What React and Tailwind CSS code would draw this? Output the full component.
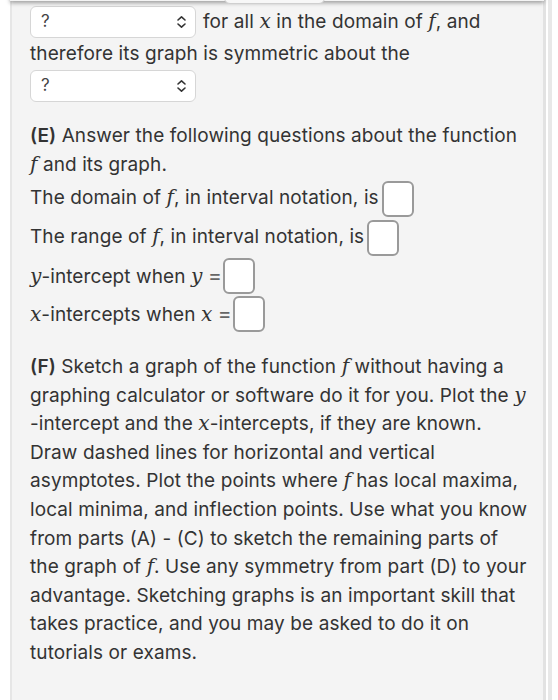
import React from 'react';

const sans = { fontFamily: 'Inter, "Liberation Sans", sans-serif' };

// math variables rendered in an italic serif, like KaTeX output
const M = ({ children }) => (
  <span className="italic text-[1.06em] leading-none [font-family:'DejaVu_Serif','Liberation_Serif',serif] tracking-normal">{children}</span>
);

const UpDown = () => (
  <svg width="11" height="14" viewBox="0 0 11 14" fill="none" stroke="#333" strokeWidth="1.6" strokeLinecap="round" strokeLinejoin="round">
    <path d="M2 5 L5.5 1.8 L9 5" />
    <path d="M2 9 L5.5 12.2 L9 9" />
  </svg>
);

const Select = () => (
  <div className="flex items-center justify-between w-[166px] h-[32px] bg-white border border-[#d6d6d6] rounded-[6px] pl-[10px] pr-[8px] shrink-0">
    <span className="text-[17px] text-[#444]">?</span>
    <UpDown />
  </div>
);

const Box = () => (
  <div className="w-[32px] h-[36px] bg-white border-2 border-[#9a9a9a] rounded-[6px] shrink-0" />
);

const App = () => {
  return (
    <div className="relative w-[558px] h-[700px] overflow-hidden bg-white text-[#333]" style={sans}>
      {/* shadow of the toolbar above the viewport */}
      <div className="absolute left-[10px] right-[14px] top-[-20px] h-[21px] bg-[#f4f4f4] shadow-[0_2px_4px_rgba(0,0,0,0.35)] z-10" />
      <div className="absolute left-[224px] w-[101px] top-[-20px] h-[24px] bg-[#f7f7f7] border border-[#cfcfcf] rounded-[6px] z-20" />

      <div className="flex h-full">
        <div className="ml-[10px] w-[536px] h-full bg-[#f4f4f4] border-l-2 border-l-[#e6e6e6] border-r-[3px] border-r-[#e2e2e2] pl-[18px] pr-[14px] pt-[6px] text-[19px] tracking-[0.1px]">
          <div className="flex items-center h-[32px]">
            <Select />
            <span className="ml-[7px] whitespace-nowrap">
              for all <M>x</M> in the domain of <M>f</M>, and
            </span>
          </div>
          <div className="leading-[29px] h-[29px] mt-[1px]">therefore its graph is symmetric about the</div>
          <div className="mt-[2px]">
            <Select />
          </div>

          <div className="mt-[19px] leading-[29px]">
            <span className="font-semibold">(E)</span> Answer the following questions about the function <M>f</M> and its graph.
          </div>
          <div className="flex items-center h-[39px]">
            <span>The domain of <M>f</M>, in interval notation, is</span>
            <span className="ml-[3px]"><Box /></span>
          </div>
          <div className="flex items-center h-[39px]">
            <span>The range of <M>f</M>, in interval notation, is</span>
            <span className="ml-[3px]"><Box /></span>
          </div>
          <div className="flex items-center h-[38px]">
            <span><M>y</M>-intercept when <M>y</M> <span className="text-[#666] text-[21px]">=</span></span>
            <span className="ml-[1px]"><Box /></span>
          </div>
          <div className="flex items-center h-[38px]">
            <span><M>x</M>-intercepts when <M>x</M> <span className="text-[#666] text-[21px]">=</span></span>
            <span className="ml-[1px]"><Box /></span>
          </div>

          <p className="mt-[20px] leading-[28.6px]">
            <span className="font-semibold">(F)</span> Sketch a graph of the function <M>f</M> without having a graphing calculator or software do it for you. Plot the <M>y</M> -intercept and the <M>x</M>-intercepts, if they are known. Draw dashed lines for horizontal and vertical asymptotes. Plot the points where <M>f</M> has local maxima, local minima, and inflection points. Use what you know from parts (A) - (C) to sketch the remaining parts of the graph of <M>f</M>. Use any symmetry from part (D) to your advantage. Sketching graphs is an important skill that takes practice, and you may be asked to do it on tutorials or exams.
          </p>
        </div>
        <div className="ml-[2px] w-[4px] h-full bg-[#e8e8e8]" />
      </div>
    </div>
  );
};

export default App;
